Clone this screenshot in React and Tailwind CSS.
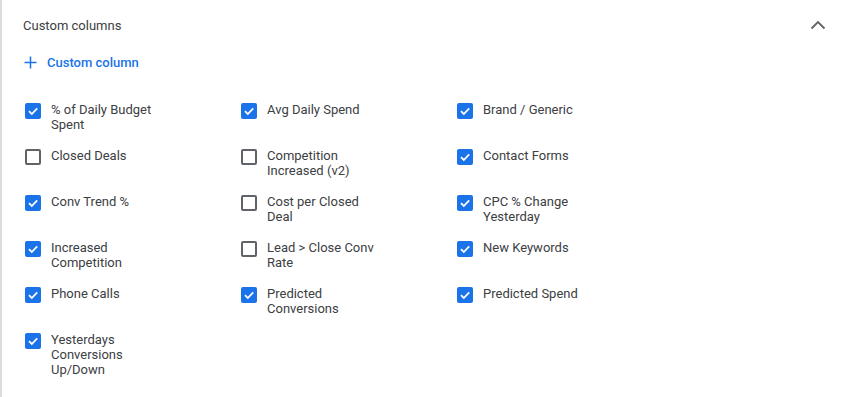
import React from "react";

const items = [
  ["% of Daily Budget Spent", true],
  ["Avg Daily Spend", true],
  ["Brand / Generic", true],
  ["Closed Deals", false],
  ["Competition Increased (v2)", false],
  ["Contact Forms", true],
  ["Conv Trend %", true],
  ["Cost per Closed Deal", false],
  ["CPC % Change Yesterday", true],
  ["Increased Competition", true],
  ["Lead > Close Conv Rate", false],
  ["New Keywords", true],
  ["Phone Calls", true],
  ["Predicted Conversions", true],
  ["Predicted Spend", true],
  ["Yesterdays Conversions Up/Down", true],
];

function Box({ checked }) {
  if (checked) {
    return (
      <div className="mt-[1px] flex h-[16px] w-[16px] shrink-0 items-center justify-center rounded-[2px] bg-[#1a73e8]">
        <svg width="12" height="12" viewBox="0 0 12 12" fill="none">
          <path d="M2 6.2 L4.8 9 L10.2 3.4" stroke="white" strokeWidth="1.8" />
        </svg>
      </div>
    );
  }
  return <div className="mt-[1px] h-[16px] w-[16px] shrink-0 rounded-[2px] border-2 border-[#5f6368]" />;
}

export default function App() {
  return (
    <div
      className="h-[397px] w-[850px] overflow-hidden border-l-2 border-[#dadce0] bg-white"
      style={{ fontFamily: "Roboto, 'Liberation Sans', sans-serif" }}
    >
      <div className="flex h-[50px] items-center justify-between pl-[21px] pr-[24px]">
        <span className="mt-[2px] text-[13px] text-[#3c4043]">Custom columns</span>
        <svg width="16" height="10" viewBox="0 0 16 10" fill="none">
          <path d="M1.5 8.5 L8 2 L14.5 8.5" stroke="#5f6368" strokeWidth="1.8" />
        </svg>
      </div>
      <div className="flex h-[25px] items-center gap-[10px] pl-[22px]">
        <svg width="13" height="13" viewBox="0 0 13 13" fill="none">
          <path d="M6.5 0.5 V12.5 M0.5 6.5 H12.5" stroke="#1a73e8" strokeWidth="1.5" />
        </svg>
        <span className="text-[13px] font-medium text-[#1a73e8]">Custom column</span>
      </div>
      <div className="mt-[27px] grid grid-cols-[216px_216px_216px] auto-rows-[46px] pl-[23px]">
        {items.map(([label, checked]) => (
          <div key={label} className="flex items-start gap-[10px]">
            <Box checked={checked} />
            <span className="max-w-[112px] text-[13px] leading-[15px] text-[#3c4043]">{label}</span>
          </div>
        ))}
      </div>
    </div>
  );
}
